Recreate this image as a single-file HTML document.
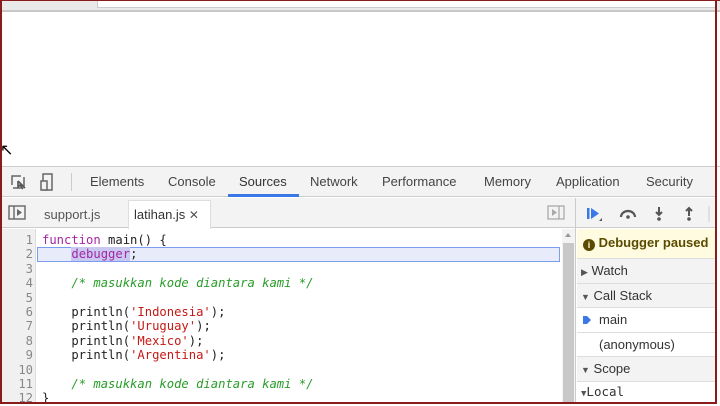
<!DOCTYPE html>
<html><head><style>
*{margin:0;padding:0;box-sizing:border-box}
body{width:720px;height:404px;overflow:hidden;background:#fff;position:relative;font-family:"Liberation Sans",sans-serif}
.a{position:absolute}
.mono{font-family:"DejaVu Sans Mono","Liberation Mono",monospace;font-size:12.2px;line-height:14.4px;white-space:pre}
.tab{position:absolute;top:174px;font-size:13px;color:#444}
.sb{position:absolute;left:577px;width:139px;font-size:13px;color:#333;border-bottom:1px solid #ddd}
</style></head><body>
<div class="a" style="left:0;top:0;width:720px;height:12px;background:#e9e9e9"></div>
<div class="a" style="left:97px;top:0;width:620px;height:8px;background:#fff;border:1px solid #ccc;border-top:none"></div>
<div class="a" style="left:0;top:0;width:720px;height:1px;background:#8b1a1a"></div>
<div class="a" style="left:0;top:10px;width:720px;height:2px;background:#c8c8c8"></div>
<div class="a" style="left:0;top:140px;font-size:16px;color:#000">&#x2196;</div>
<div class="a" style="left:0;top:166px;width:720px;height:1px;background:#ccc"></div>
<div class="a" style="left:0;top:167px;width:716px;height:30px;background:#f3f3f3;border-bottom:1px solid #ccc"></div>
<svg class="a" style="left:10px;top:173px" width="50" height="20"><rect x="2" y="3" width="12" height="12" fill="none" stroke="#666" stroke-width="1.5" stroke-dasharray="9 4"/><path d="M8 8l7 7M8 8v6l2-2 3 4" stroke="#555" stroke-width="1.6" fill="none"/><rect x="33" y="1" width="9" height="16" fill="none" stroke="#666" stroke-width="1.5"/><rect x="31" y="8" width="6" height="9" fill="#f3f3f3" stroke="#666" stroke-width="1.5"/></svg>
<div class="a" style="left:71px;top:173px;width:1px;height:18px;background:#ccc"></div>
<div class="tab" style="left:90px">Elements</div>
<div class="tab" style="left:168px">Console</div>
<div class="tab" style="left:239px;color:#333">Sources</div>
<div class="a" style="left:228px;top:194px;width:71px;height:3px;background:#3b78e7"></div>
<div class="tab" style="left:310px">Network</div>
<div class="tab" style="left:382px">Performance</div>
<div class="tab" style="left:484px">Memory</div>
<div class="tab" style="left:556px">Application</div>
<div class="tab" style="left:646px">Security</div>
<div class="a" style="left:0;top:198px;width:576px;height:30px;background:#f3f3f3;border-bottom:1px solid #ccc"></div>
<svg class="a" style="left:8px;top:205px" width="20" height="16"><rect x="1" y="1" width="16" height="13" fill="none" stroke="#666" stroke-width="1.4"/><line x1="6" y1="1" x2="6" y2="14" stroke="#666" stroke-width="1.4"/><path d="M9 4l5 3.5-5 3.5z" fill="#666"/></svg>
<div class="a" style="left:44px;top:207px;font-size:13px;color:#555">support.js</div>
<div class="a" style="left:128px;top:200px;width:83px;height:29px;background:#fff;border:1px solid #ddd;border-bottom:none"></div>
<div class="a" style="left:134px;top:207px;font-size:13px;color:#333">latihan.js <span style="color:#555;font-size:12px">&#x2715;</span></div>
<svg class="a" style="left:547px;top:205px" width="20" height="16"><rect x="1" y="1" width="16" height="13" fill="none" stroke="#aaa" stroke-width="1.3"/><line x1="12" y1="1" x2="12" y2="14" stroke="#aaa" stroke-width="1.3"/><path d="M5 4l5 3.5-5 3.5z" fill="#aaa"/></svg>
<div class="a" style="left:575px;top:198px;width:1px;height:206px;background:#ccc"></div>
<div class="a" style="left:2px;top:229px;width:34px;height:175px;background:#f0f0f0;border-right:1px solid #ddd"></div>
<div class="a" style="left:37px;top:247px;width:523px;height:15px;background:#e8ecfa;border:1px solid #7b9df0"></div>
<div class="a mono" style="left:4px;top:233px;width:29px;text-align:right;color:#888">1
2
3
4
5
6
7
8
9
10
11
12</div>
<div class="a mono" style="left:42px;top:233px;color:#222"><span style="color:#a626a4">function</span> main() {
    <span style="color:#a626a4;background:#c8c8f0">debugger</span>;

    <i style="color:#2a9d2a">/* masukkan kode diantara kami */</i>

    println(<span style="color:#c41a16">'Indonesia'</span>);
    println(<span style="color:#c41a16">'Uruguay'</span>);
    println(<span style="color:#c41a16">'Mexico'</span>);
    println(<span style="color:#c41a16">'Argentina'</span>);

    <i style="color:#2a9d2a">/* masukkan kode diantara kami */</i>
}</div>
<div class="a" style="left:562px;top:229px;width:13px;height:175px;background:#f3f3f3"></div>
<div class="a" style="left:563px;top:243px;width:11px;height:161px;background:#c8c8c8"></div>
<div class="a" style="left:565px;top:233px;width:0;height:0;border:3px solid transparent;border-bottom:4px solid #999;border-top:none"></div>
<div class="a" style="left:576px;top:198px;width:140px;height:30px;background:#f3f3f3;border-bottom:1px solid #ccc"></div>
<svg class="a" style="left:584px;top:204px" width="128" height="20"><rect x="3" y="4" width="2.5" height="11" fill="#3b78e7"/><path d="M7 4l8 5.5-8 5.5z" fill="#3b78e7"/><path d="M15 17l3-3v3z" fill="#555"/><path d="M37 13a7 6 0 0 1 14 0" stroke="#555" stroke-width="2.2" fill="none"/><circle cx="44" cy="13" r="1.8" fill="#555"/><path d="M75 3v8M72 8l3 3 3-3" stroke="#555" stroke-width="2" fill="none"/><circle cx="75" cy="15" r="1.8" fill="#555"/><path d="M105 12v-8M102 7l3-3 3 3" stroke="#555" stroke-width="2" fill="none"/><circle cx="105" cy="15" r="1.8" fill="#555"/><line x1="125" y1="2" x2="125" y2="18" stroke="#ccc"/></svg>
<div class="sb" style="top:229px;height:30px;background:#fffbe0;font-weight:bold;color:#5b4b00;padding:6px 0 0 6px"><span style="display:inline-block;width:12px;height:12px;border-radius:6px;background:#5b4b00;color:#fffbe0;font-size:9px;text-align:center;line-height:12px;vertical-align:-1px">i</span> Debugger paused</div>
<div class="sb" style="top:259px;height:25px;background:#f3f3f3;padding:4px 0 0 4px"><span style="font-size:9px;color:#555">&#x25B6;</span> Watch</div>
<div class="sb" style="top:284px;height:24px;background:#f3f3f3;padding:4px 0 0 4px"><span style="font-size:9px;color:#555">&#x25BC;</span> Call Stack</div>
<div class="sb" style="top:308px;height:25px;padding:4px 0 0 22px">main</div>
<svg class="a" style="left:582px;top:315px" width="10" height="10"><path d="M1 1h4l4 4-4 4H1z" fill="#3b78e7"/></svg>
<div class="sb" style="top:333px;height:24px;padding:4px 0 0 22px">(anonymous)</div>
<div class="sb" style="top:357px;height:25px;background:#f3f3f3;padding:4px 0 0 4px"><span style="font-size:9px;color:#555">&#x25BC;</span> Scope</div>
<div class="sb" style="top:382px;height:22px;padding:2px 0 0 4px;font-family:'DejaVu Sans Mono',monospace;font-size:12.5px"><span style="font-size:9px;color:#555">&#x25BC;</span>Local</div>
<div class="a" style="left:0;top:0;width:2px;height:404px;background:#8b1a1a"></div>
<div class="a" style="left:715px;top:0;width:2px;height:404px;background:#8b1a1a"></div>
<div class="a" style="left:0;top:402px;width:717px;height:2px;background:#8b1a1a"></div>
</body></html>
